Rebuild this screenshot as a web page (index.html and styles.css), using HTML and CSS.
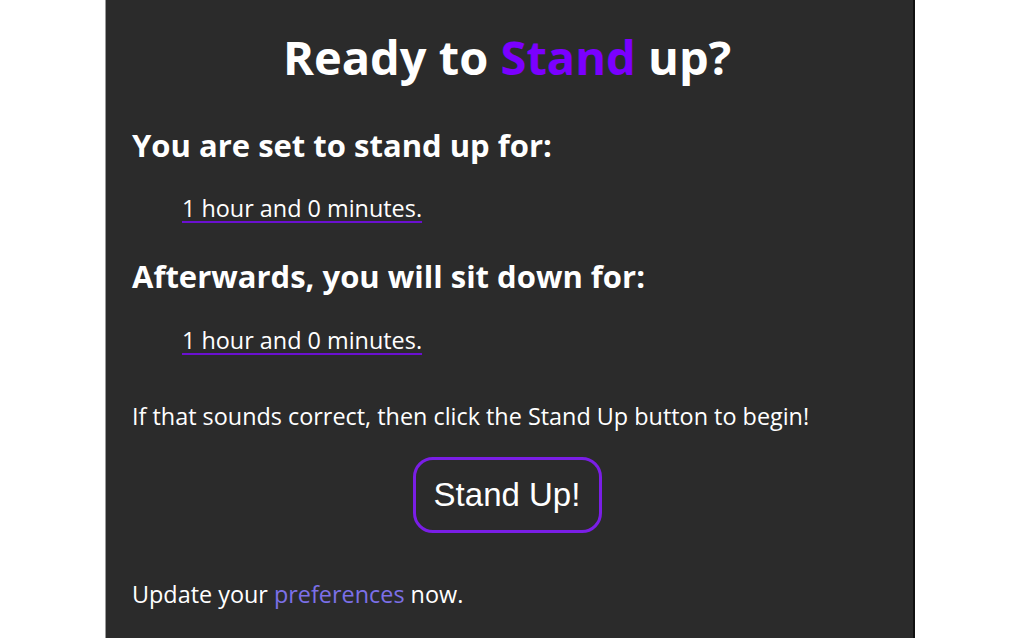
FILE: index.html
```html
<!DOCTYPE html>
<html lang="en">
<head>
<meta charset="utf-8">
<title>Ready to Stand up?</title>
<link rel="stylesheet" href="styles.css">
</head>
<body>
<main class="panel">
  <h1 class="title">Ready to <span class="accent">Stand</span> up?</h1>
  <h2 class="label label-first">You are set to stand up for:</h2>
  <p class="duration duration-first"><span class="value">1 hour and 0 minutes.</span></p>
  <h2 class="label label-second">Afterwards, you will sit down for:</h2>
  <p class="duration duration-second"><span class="value">1 hour and 0 minutes.</span></p>
  <p class="note">If that sounds correct, then click the Stand Up button to begin!</p>
  <div class="actions"><button class="btn" type="button">Stand Up!</button></div>
  <p class="note footer">Update your <a class="link" href="#">preferences</a> now.</p>
</main>
</body>
</html>
```

FILE: styles.css
```css
html, body {
  margin: 0;
  padding: 0;
  background: #ffffff;
}
.panel {
  box-sizing: border-box;
  width: 810px;
  height: 638px;
  margin: 0 auto;
  padding: 0 5px 0 26px;
  background: #2b2b2b;
  border-left: 1px solid #9a9a9a;
  border-right: 2px solid #111111;
  color: #ffffff;
  font-family: "Open Sans", "Noto Sans", sans-serif;
  overflow: hidden;
  display: flex;
  flex-direction: column;
}
.title {
  margin: 29px 0 0 -26px;
  font-size: 47px;
  line-height: 56px;
  font-weight: 700;
  text-align: center;
}
.accent { color: #7b00ff; }
.label {
  margin: 40px 0 0;
  font-size: 31px;
  line-height: 40px;
  font-weight: 700;
}
.label-second { margin-top: 33px; }
.duration {
  margin: 28px 0 0 50px;
  font-size: 23.4px;
  line-height: 30px;
}
.duration-second { margin-top: 29px; }
.value {
  text-decoration: underline;
  text-decoration-color: #6a10d0;
  text-decoration-thickness: 2px;
  text-underline-offset: 4px;
}
.note {
  margin: 46px 0 0;
  font-size: 23.4px;
  line-height: 30px;
}
.actions {
  display: flex;
  justify-content: center;
  margin: 26px 0 0 -26px;
}
.btn {
  box-sizing: border-box;
  width: 189px;
  height: 76px;
  background: #2b2b2b;
  color: #ffffff;
  border: 3px solid #7a1ee6;
  border-radius: 20px;
  font-family: "Liberation Sans", Arial, sans-serif;
  font-size: 33px;
  padding: 0;
}
.footer { margin-top: 46px; }
.link {
  color: #7c70e8;
  text-decoration: none;
}
```
